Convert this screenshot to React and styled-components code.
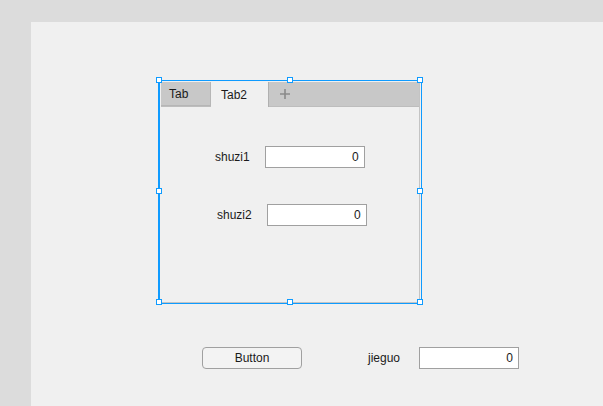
import React from 'react';
import styled, { createGlobalStyle } from 'styled-components';

const GlobalStyle = createGlobalStyle`
  html, body {
    margin: 0;
    padding: 0;
    background: #dcdcdc;
    font-family: "Liberation Sans", Arial, sans-serif;
    font-size: 12px;
    color: #1a1a1a;
  }
`;

const tabs = ['Tab', 'Tab2'];
const inputs = [
  { label: 'shuzi1', indent: 0 },
  { label: 'shuzi2', indent: 2 },
];
const handles = [
  ['0%', '0%'], ['50%', '0%'], ['100%', '0%'],
  ['0%', '50%'], ['100%', '50%'],
  ['0%', '100%'], ['50%', '100%'], ['100%', '100%'],
];

const App = () => {
  return (
    <>
      <GlobalStyle />
      <Workspace>
        <Canvas>
          {/* selected tab group, placed on the design canvas */}
          <Selection x={127} y={58} w={264} h={224}>
            <TabGroup>
              <TabBar>
                {tabs.map((t, i) => (
                  <TabItem key={t} active={i === 1} w={i === 0 ? 50 : 58}>{t}</TabItem>
                ))}
                <AddTab>
                  <svg width="12" height="12" viewBox="0 0 12 12">
                    <path d="M6 1v10M1 6h10" stroke="#8a8a8a" strokeWidth="1.6" />
                  </svg>
                </AddTab>
              </TabBar>
              <TabBody>
                {inputs.map(f => (
                  <FieldRow key={f.label} indent={f.indent}>
                    <Label>{f.label}</Label>
                    <NumberBox>0</NumberBox>
                  </FieldRow>
                ))}
              </TabBody>
            </TabGroup>
            {handles.map(([hx, hy]) => (
              <Handle key={hx + hy} hx={hx} hy={hy} />
            ))}
          </Selection>

          <BottomRow x={171} y={325}>
            <PushButton>Button</PushButton>
            <FieldRow gap={19}>
              <Label>jieguo</Label>
              <NumberBox>0</NumberBox>
            </FieldRow>
          </BottomRow>
        </Canvas>
      </Workspace>
    </>
  );
};

const Workspace = styled.div`
  width: 603px;
  height: 406px;
  padding: 22px 0 0 31px;
  box-sizing: border-box;
  overflow: hidden;
`;

const Canvas = styled.div`
  position: relative;
  width: 100%;
  height: 100%;
  background: #f0f0f0;
`;

const Selection = styled.div`
  position: absolute;
  left: ${p => p.x}px;
  top: ${p => p.y}px;
  width: ${p => p.w}px;
  height: ${p => p.h}px;
  box-sizing: border-box;
  border: 1px solid #0f9bff;
  border-left-width: 2px;
  padding: 1px 1px 0 0;
  display: flex;
`;

const TabGroup = styled.div`
  flex: 1;
  display: flex;
  flex-direction: column;
  border-right: 1px solid #c4c4c4;
  border-bottom: 1px solid #c4c4c4;
`;

const TabBar = styled.div`
  display: flex;
  align-items: stretch;
  height: 24px;
  background: #c8c8c8;
  border-bottom: 1px solid #bdbdbd;
  margin-left: 1px;
`;

const TabItem = styled.div`
  width: ${p => p.w}px;
  box-sizing: border-box;
  display: flex;
  align-items: center;
  padding-left: ${p => (p.active ? 10 : 8)}px;
  font-size: 12px;
  background: ${p => (p.active ? '#f0f0f0' : '#c8c8c8')};
  border-right: 1px solid ${p => (p.active ? '#b0b0b0' : '#b6b6b6')};
  border-bottom: ${p => (p.active ? 'none' : '1px solid #b6b6b6')};
  margin-bottom: ${p => (p.active ? '-1px' : '0')};
  color: #1a1a1a;
`;

const AddTab = styled.div`
  display: flex;
  align-items: center;
  padding-left: 10px;
`;

const TabBody = styled.div`
  flex: 1;
  background: #f0f0f0;
  display: flex;
  flex-direction: column;
  align-items: flex-start;
  gap: 36px;
  padding: 39px 0 0 55px;
`;

const FieldRow = styled.div`
  display: flex;
  align-items: center;
  gap: ${p => p.gap || 15}px;
  margin-left: ${p => p.indent || 0}px;
`;

const BottomRow = styled.div`
  position: absolute;
  left: ${p => p.x}px;
  top: ${p => p.y}px;
  display: flex;
  align-items: center;
  gap: 66px;
`;

const Handle = styled.div`
  position: absolute;
  left: ${p => p.hx};
  top: ${p => p.hy};
  width: 6px;
  height: 6px;
  margin: -4px 0 0 -4px;
  box-sizing: border-box;
  background: #ffffff;
  border: 1px solid #0f9bff;
`;

const Label = styled.span`
  font-size: 12px;
  color: #1a1a1a;
`;

const NumberBox = styled.div`
  width: 100px;
  height: 22px;
  box-sizing: border-box;
  border: 1px solid #a0a0a0;
  background: #ffffff;
  display: flex;
  align-items: center;
  justify-content: flex-end;
  padding-right: 5px;
  font-size: 12px;
`;

const PushButton = styled.button`
  width: 100px;
  height: 22px;
  border: 1px solid #a0a0a0;
  border-radius: 4px;
  background: #f3f3f3;
  font-family: "Liberation Sans", Arial, sans-serif;
  font-size: 12px;
  color: #1a1a1a;
  padding: 0;
`;

export default App;
